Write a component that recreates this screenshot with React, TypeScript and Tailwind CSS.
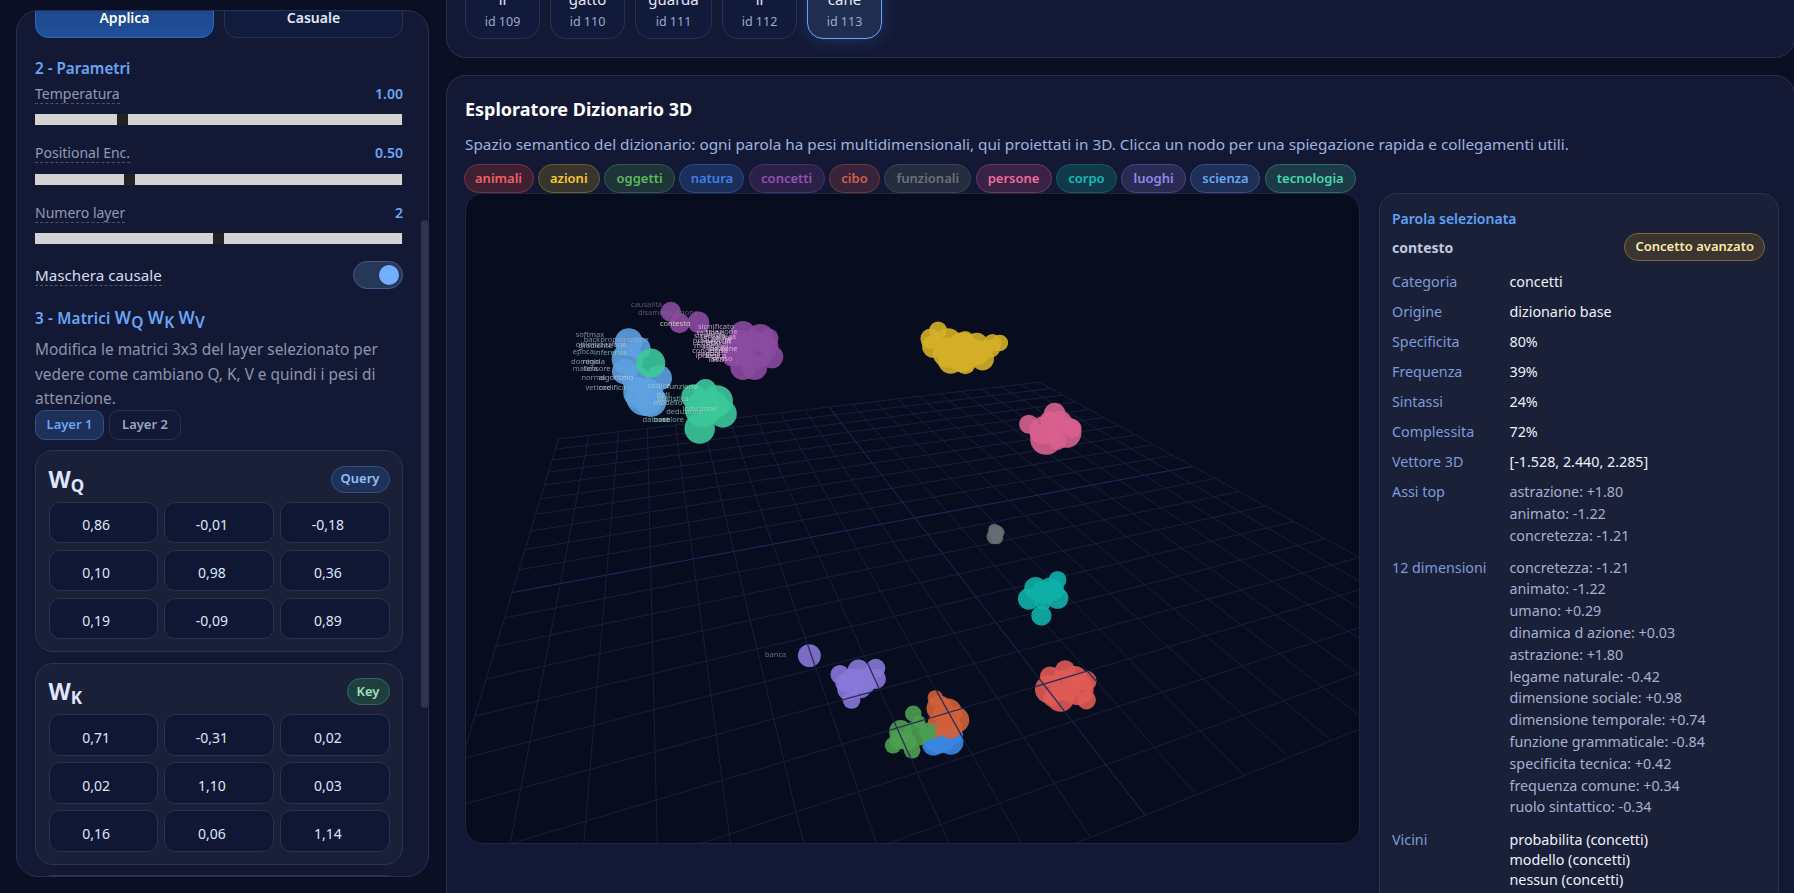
import React from "react";

const px = (z: number) => z / 1.7326 - 5.8;
const py = (z: number) => z / 2.376 - 3.4;
const pr = (z: number) => (z * 1.1) / 1.7326;

function fitHomography(pts: [number, number, number, number][]) {
  const n = 8;
  const M: number[][] = Array.from({ length: n }, () => new Array(n + 1).fill(0));
  const add = (r: number[], b: number) => {
    for (let i = 0; i < n; i++) {
      for (let j = 0; j < n; j++) M[i][j] += r[i] * r[j];
      M[i][n] += r[i] * b;
    }
  };
  for (const [s, v, X, Y] of pts) {
    add([s, v, 1, 0, 0, 0, -s * X, -v * X], X);
    add([0, 0, 0, s, v, 1, -s * Y, -v * Y], Y);
  }
  for (let i = 0; i < n; i++) {
    let p = i;
    for (let k = i + 1; k < n; k++) if (Math.abs(M[k][i]) > Math.abs(M[p][i])) p = k;
    [M[i], M[p]] = [M[p], M[i]];
    for (let k = 0; k < n; k++) {
      if (k === i) continue;
      const f = M[k][i] / M[i][i];
      for (let j = i; j <= n; j++) M[k][j] -= f * M[i][j];
    }
  }
  return M.map((r, i) => r[n] / r[i]);
}

const corner: [number, number, number, number] = [0, 0, 170, 590];
const leftMid: [number, number, number, number] = [1, 0, 90, 955];
const hm = fitHomography([
  corner, corner, corner, corner, corner, corner,
  leftMid, leftMid, leftMid,
  [0, 1, 1003, 455],
  [0, 1, 1003, 455],
  [1, 1, 1270, 655],
  [0, 0.5, 640, 515],
  [1, 0.5, 787, 778],
]);

const H = (s: number, v: number): [number, number] => {
  const d = hm[6] * s + hm[7] * v + 1;
  return [px((hm[0] * s + hm[1] * v + hm[2]) / d), py((hm[3] * s + hm[4] * v + hm[5]) / d)];
};

type C = [number, number, number];

const clusters: { color: string; pts: C[] }[] = [
  { color: "#d5af28", pts: [[828,332,14],[815,352,16],[845,360,22],[870,370,22],[820,370,18],[845,385,24],[870,395,24],[895,385,20],[905,400,18],[875,412,16],[850,405,20],[920,375,14],[935,362,13],[922,362,14],[895,365,18],[885,380,20],[875,355,14]] },
  { color: "#d8618e", pts: [[985,555,15],[1030,530,17],[1010,570,22],[1040,550,18],[1015,590,25],[1050,575,24],[1035,595,14],[1020,545,14],[1060,565,15]] },
  { color: "#666d70", pts: [[925,805,9],[932,812,10],[925,822,12],[930,825,10],[928,812,12]] },
  { color: "#0fb0a9", pts: [[1035,925,14],[997,945,18],[1022,945,17],[1010,955,18],[985,970,17],[1035,968,17],[1010,975,14],[1007,1010,16],[1030,950,15]] },
  { color: "#de5a55", pts: [[1048,1140,16],[1022,1155,16],[1085,1165,16],[1050,1175,25],[1020,1185,22],[1070,1185,25],[1040,1205,22],[1085,1210,15],[1025,1205,14],[1065,1160,20]] },
  { color: "#8878d8", pts: [[605,1105,18],[658,1150,15],[720,1135,15],[690,1140,17],[680,1165,20],[700,1165,20],[720,1160,16],[672,1185,17],[678,1210,14],[695,1185,14],[665,1170,14]] },
  { color: "#3a86e2", pts: [[830,1300,25],[850,1310,20],[820,1315,18],[845,1285,15],[855,1295,15]] },
  { color: "#d0603a", pts: [[823,1205,12],[830,1230,20],[845,1240,22],[860,1258,20],[830,1265,18],[850,1275,18],[825,1285,10]] },
  { color: "#4da050", pts: [[785,1243,13],[795,1262,10],[763,1285,18],[790,1290,20],[810,1285,14],[760,1305,15],[750,1318,13],[783,1330,13],[775,1310,14]] },
  { color: "#8a4aa0", pts: [[365,288,16],[380,315,16],[413,313,17],[490,340,20],[520,350,22],[535,350,15],[480,380,25],[510,380,30],[540,395,18],[490,420,20],[510,420,20],[470,395,15],[535,370,15],[490,365,22]] },
  { color: "#5ea0e0", pts: [[292,360,22],[310,375,18],[290,400,25],[285,430,20],[305,450,22],[320,490,30],[345,445,20],[330,500,25],[310,480,25]] },
  { color: "#3cc89a", pts: [[405,490,20],[425,475,18],[445,500,25],[420,520,28],[455,530,22],[415,565,24],[440,510,22],[330,410,23]] },
];

const lowerIdx = [4, 5, 6, 7, 8];

const labels: [string, number, number, string][] = [
  ["softmax",200,347,"#9fb4c4"],["backpropagazione",214,359,"#9fb4c4"],["ottimizzazione",200,372,"#b5c6d2"],["gradiente",205,375,"#b5c6d2"],
  ["epoca",195,388,"#9fb4c4"],["inferenza",232,391,"#8fd8b0"],["dominio",192,411,"#9fb4c4"],["regola",212,411,"#b5c6d2"],["malizia",195,429,"#9fb4c4"],
  ["tensore",214,429,"#b5c6d2"],["norma",210,451,"#9fb4c4"],["algoritmo",240,451,"#c5d6e2"],["vettore",217,474,"#9fb4c4"],["codifica",240,474,"#b5c6d2"],
  ["codice",325,470,"#9fd0d0"],["funzione",358,472,"#a8d8c8"],["dati",340,490,"#a8d8c8"],["statistica",342,500,"#a8d8c8"],["modello",335,510,"#a8d8c8"],
  ["deduzione",357,530,"#8fc8b8"],["induzione",385,524,"#9fd8c0"],["dataset",316,549,"#8fc8b8"],["base",335,549,"#a8d8c8"],["valore",350,549,"#8fc8b8"],
  ["causalità",296,277,"#7d6a8a"],["disambiguazione",308,296,"#7d6a8a"],["contesto",346,321,"#f5f0c8"],
  ["significato",412,330,"#e8c0e8"],["relazione",425,340,"#e8c0e8"],["struttura",405,350,"#e8c0e8"],["semantica",415,352,"#f0c8f0"],["probabilità",403,362,"#e8c0e8"],["nessun",425,364,"#f0c8f0"],
  ["modello",405,374,"#f0d0f0"],["sintassi",420,376,"#e8c0e8"],["concetto",402,386,"#e8c0e8"],["teoria",428,386,"#f0d0f0"],["ipotesi",408,398,"#f0c8f0"],["logica",425,398,"#e8c0e8"],["idea",430,408,"#e8c0e8"],
  ["ragione",410,344,"#f0c8f0"],["causa",436,356,"#f0d0f0"],["effetto",410,368,"#f0c8f0"],["nozione",432,380,"#f0d0f0"],["regola",412,392,"#f0c8f0"],["senso",436,404,"#f0c8f0"],
];

function Scene() {
  const lines: { a: [number, number]; b: [number, number]; c: boolean }[] = [];
  for (let i = 0; i <= 20; i++) lines.push({ a: H(i / 10, 0), b: H(i / 10, 1), c: i === 10 });
  for (let j = 0; j <= 20; j++) lines.push({ a: H(0, j / 20), b: H(2, j / 20), c: j === 10 });
  return (
    <svg viewBox="0 0 893 649" className="block h-full w-full blur-[0.7px]">
      <defs>
        <clipPath id="lower">
          {lowerIdx.flatMap((k) => clusters[k].pts).map((p, i) => (
            <circle key={i} cx={px(p[0])} cy={py(p[1])} r={pr(p[2])} />
          ))}
        </clipPath>
      </defs>
      {lines.map((l, i) => (
        <line key={i} x1={l.a[0]} y1={l.a[1]} x2={l.b[0]} y2={l.b[1]} stroke={l.c ? "#24285a" : "#1a1e3f"} strokeWidth={1} />
      ))}
      {clusters.map((c, i) => (
        <g key={i} fill={c.color} fillOpacity={0.9}>
          {c.pts.map((p, j) => (
            <circle key={j} cx={px(p[0])} cy={py(p[1])} r={pr(p[2])} />
          ))}
        </g>
      ))}
      <g clipPath="url(#lower)">
        {lines.map((l, i) => (
          <line key={i} x1={l.a[0]} y1={l.a[1]} x2={l.b[0]} y2={l.b[1]} stroke="#2a2c55" strokeWidth={1.3} />
        ))}
      </g>
      <g fontSize={7.5} fontFamily="'Noto Sans', sans-serif">
        {labels.map(([t, x, y, c], i) => (
          <text key={i} x={px(x)} y={py(y)} fill={c} fillOpacity={0.75}>{t}</text>
        ))}
        <text x={px(528)} y={py(1107)} fill="#6a6f88">banca</text>
      </g>
    </svg>
  );
}

function Param({ label, value, mt, smt, left }: { label: string; value: string; mt: string; smt: string; left: number }) {
  return (
    <div className={mt}>
      <div className="flex items-start justify-between">
        <span className="border-b border-dashed border-[#4a5270] text-[14px] leading-[18px] text-[#8f9ab8]">{label}</span>
        <span className="text-[14px] font-semibold leading-[18px] text-[#6aa5f5]">{value}</span>
      </div>
      <div className={`${smt} flex h-[11px] w-[368px] border-r border-[#222] bg-[#d3d3d3]`}>
        <div style={{ width: left }} />
        <div className="h-full w-[11px] bg-[#222]" />
      </div>
    </div>
  );
}

function Matrix({ sub, badge, badgeCls, values, className }: { sub: string; badge: string; badgeCls: string; values: string[]; className: string }) {
  return (
    <div className={`${className} rounded-[18px] border border-[#2d3350] bg-[#1a2038] px-[12.5px] pb-[12px] pt-[14.5px]`}>
      <div className="flex h-[27px] items-center justify-between">
        <div className="text-[23px] font-bold leading-[27px] text-[#dfe6ff]">
          W<sub className="text-[17px]">{sub}</sub>
        </div>
        <span className={`flex h-[27px] items-center rounded-full border px-[9px] text-[13px] font-semibold ${badgeCls}`}>{badge}</span>
      </div>
      <div className="mt-[9px] grid grid-cols-3 gap-x-[6.5px] gap-y-[6.5px]">
        {values.map((v, i) => (
          <div key={i} className="flex h-[41.5px] items-center justify-center rounded-[11px] border border-[#2a3050] bg-[#101735] pr-[14px] pt-[5px] text-[14px] text-[#dfe6f8]">
            {v}
          </div>
        ))}
      </div>
    </div>
  );
}

const chips = [
  { t: "animali", c: "bg-[#3f2033] border-[#70354a] text-[#f06060] w-[70px]" },
  { t: "azioni", c: "bg-[#38342e] border-[#6e5f2c] text-[#f5cc30] w-[62px]" },
  { t: "oggetti", c: "bg-[#1f3438] border-[#30594a] text-[#5cb860] w-[71px]" },
  { t: "natura", c: "bg-[#1c2f5a] border-[#2b4a8a] text-[#4080e8] w-[65px]" },
  { t: "concetti", c: "bg-[#2b2148] border-[#4a2f6a] text-[#9350b0] w-[76px]" },
  { t: "cibo", c: "bg-[#38233a] border-[#6a3a3a] text-[#d06048] w-[51px]" },
  { t: "funzionali", c: "bg-[#262c40] border-[#3a4258] text-[#6a7078] w-[87px]" },
  { t: "persone", c: "bg-[#3a2245] border-[#70386a] text-[#f06ca0] w-[76px]" },
  { t: "corpo", c: "bg-[#103a4a] border-[#165a60] text-[#10bfb8] w-[61px]" },
  { t: "luoghi", c: "bg-[#2a2a52] border-[#474480] text-[#9088e8] w-[65px]" },
  { t: "scienza", c: "bg-[#1e2f58] border-[#3a5080] text-[#68a8f0] w-[70px]" },
  { t: "tecnologia", c: "bg-[#1c3a48] border-[#2e6a60] text-[#45d8a8] w-[91px]" },
];

const info: [string, string][] = [
  ["Categoria", "concetti"], ["Origine", "dizionario base"], ["Specificita", "80%"], ["Frequenza", "39%"],
  ["Sintassi", "24%"], ["Complessita", "72%"], ["Vettore 3D", "[-1.528, 2.440, 2.285]"],
];
const dims = ["concretezza: -1.21","animato: -1.22","umano: +0.29","dinamica d azione: +0.03","astrazione: +1.80","legame naturale: -0.42","dimensione sociale: +0.98","dimensione temporale: +0.74","funzione grammaticale: -0.84","specificita tecnica: +0.42","frequenza comune: +0.34","ruolo sintattico: -0.34"];

const tokens = [
  { w: "il", id: "id 109", c: "w-[75px]" },
  { w: "gatto", id: "id 110", c: "w-[75px]" },
  { w: "guarda", id: "id 111", c: "w-[77px]" },
  { w: "il", id: "id 112", c: "w-[75px]" },
];

export default function App() {
  return (
    <div className="flex h-screen overflow-hidden bg-[#0a0f24] font-['Noto_Sans','Open_Sans',sans-serif]">
      <aside className="relative ml-4 mt-[10px] h-[867px] w-[413px] shrink-0 overflow-hidden rounded-[22px] border border-[#2a3050] bg-[#131935]">
        <div className="-mt-[13px] ml-[18px] w-[368px]">
          <div className="flex gap-[10px]">
            <button className="h-[40px] flex-1 rounded-[13px] border border-[#2f6ac0] bg-gradient-to-b from-[#1c4589] to-[#1f5099] pb-[2px] text-[14px] font-semibold text-white">Applica</button>
            <button className="h-[40px] flex-1 rounded-[13px] border border-[#2a3050] bg-[#111b3d] pb-[2px] text-[14px] font-semibold text-[#e3e8f8]">Casuale</button>
          </div>
          <div className="mt-[20px] text-[15.2px] font-semibold leading-[20px] text-[#6aa5f5]">2 - Parametri</div>
          <Param label="Temperatura" value="1.00" mt="mt-[7px]" smt="mt-[10px]" left={82} />
          <Param label="Positional Enc." value="0.50" mt="mt-[19px]" smt="mt-[11px]" left={89} />
          <Param label="Numero layer" value="2" mt="mt-[19px]" smt="mt-[10px]" left={178} />
          <div className="mt-[17px] flex h-[28px] items-center justify-between">
            <span className="mt-[2px] border-b border-dashed border-[#4a5270] text-[15.2px] leading-[19px] text-[#d6dcf0]">Maschera causale</span>
            <span className="flex h-[28px] w-[50px] items-center justify-end rounded-full border border-[#3f5a8a] bg-[#263757] pr-[3px]">
              <span className="h-[20px] w-[20px] rounded-full bg-[#74aeff]" />
            </span>
          </div>
          <div className="mt-[18px] text-[15.2px] font-semibold leading-[22px] tracking-[0.2px] text-[#6aa5f5]">
            3 - Matrici <span className="text-[17px]">W</span><sub className="text-[15.5px]">Q</sub> <span className="text-[17px]">W</span><sub className="text-[15.5px]">K</sub> <span className="text-[17px]">W</span><sub className="text-[15.5px]">V</sub>
          </div>
          <p className="mt-[9px] text-[15.4px] leading-[24.5px] text-[#8c95ae]">Modifica le matrici 3x3 del layer selezionato per vedere come cambiano Q, K, V e quindi i pesi di attenzione.</p>
          <div className="-mt-[2px] flex gap-[5px]">
            <button className="h-[30px] w-[69px] rounded-[10px] border border-[#36507f] bg-[#1e3158] text-[13px] font-semibold text-[#6aa5f5]">Layer 1</button>
            <button className="h-[30px] w-[72px] rounded-[10px] border border-[#2a3050] text-[13px] font-semibold text-[#9aa5c0]">Layer 2</button>
          </div>
          <Matrix className="mt-[10.5px]" sub="Q" badge="Query" badgeCls="border-[#34507f] bg-[#1e3158] text-[#90c0f8]" values={["0,86","-0,01","-0,18","0,10","0,98","0,36","0,19","-0,09","0,89"]} />
          <Matrix className="mt-[10.5px]" sub="K" badge="Key" badgeCls="border-[#2f6a5a] bg-[#1f3f3f] text-[#9fe0b8]" values={["0,71","-0,31","0,02","0,02","1,10","0,03","0,16","0,06","1,14"]} />
          <div className="mt-[10px] h-[40px] rounded-[18px] border border-[#2d3350] bg-[#1a2038]" />
        </div>
        <div className="absolute right-0 top-[209px] h-[488px] w-[7px] rounded-full bg-[#2f3550]" />
      </aside>

      <main className="ml-[17px] w-[1349px] shrink-0">
        <section className="-mt-[38px] rounded-[20px] border border-[#2a3050] bg-[#131935] px-[18px] pb-[18px] pt-[18px]">
          <div className="flex gap-[10px]">
            {tokens.map((t, i) => (
              <div key={i} className={`flex h-[57.5px] flex-col items-center rounded-[16px] border border-[#2a3050] bg-[#111a3a] pt-[5.5px] ${t.c}`}>
                <span className="text-[15px] leading-[22px] text-[#e3e8f8]">{t.w}</span>
                <span className="mt-[3px] text-[12.5px] leading-[18px] text-[#9aa8d0]">{t.id}</span>
              </div>
            ))}
            <div className="flex h-[57.5px] w-[75px] flex-col items-center rounded-[16px] border border-[#6aa5f5] bg-[#1f2d50] pt-[5.5px] shadow-[0_0_18px_rgba(80,140,240,0.25)]">
              <span className="text-[15px] leading-[22px] text-[#e3e8f8]">cane</span>
              <span className="mt-[3px] text-[12.5px] leading-[18px] text-[#9aa8d0]">id 113</span>
            </div>
          </div>
        </section>

        <section className="mt-[17.5px] rounded-[20px] border border-[#2a3050] bg-[#131935] pl-[18px] pr-[15px] pt-[21px]">
          <h2 className="text-[18px] font-bold leading-[24px] text-white">Esploratore Dizionario 3D</h2>
          <p className="mt-[11.5px] text-[15.3px] leading-[22px] text-[#9fb2de]">Spazio semantico del dizionario: ogni parola ha pesi multidimensionali, qui proiettati in 3D. Clicca un nodo per una spiegazione rapida e collegamenti utili.</p>
          <div className="-ml-[1.5px] mt-[9.5px] flex gap-[4.3px]">
            {chips.map((c) => (
              <span key={c.t} className={`flex h-[29px] shrink-0 items-center justify-center rounded-full border text-[13px] font-semibold ${c.c}`}>{c.t}</span>
            ))}
          </div>
          <div className="flex items-start gap-[19px]">
            <div className="h-[651px] w-[895px] shrink-0 overflow-hidden rounded-[18px] border border-[#20263f] bg-[#070c1e]">
              <Scene />
            </div>
            <div className="w-[400px] shrink-0 rounded-[18px] border border-[#2d3350] bg-[#1a2038] px-[12px] pb-[40px] pt-[15px]">
              <div className="text-[14px] font-semibold leading-[20px] text-[#5ea0f5]">Parola selezionata</div>
              <div className="mt-[4px] flex h-[28px] items-center justify-between pr-[1px]">
                <span className="text-[14px] font-bold text-[#c0c8e0]">contesto</span>
                <span className="flex h-[28px] items-center rounded-full border border-[#7a6a30] bg-[#3a3530] px-[10px] text-[13px] font-semibold text-[#ffe9a8]">Concetto avanzato</span>
              </div>
              <div className="mt-[10px] flex flex-col gap-[8px]">
                {info.map(([k, v]) => (
                  <div key={k} className="flex text-[14.3px] leading-[22px]">
                    <span className="w-[117.5px] shrink-0 text-[#7f9ad8]">{k}</span>
                    <span className="text-[#eef1fa]">{v}</span>
                  </div>
                ))}
                <div className="flex text-[14.3px] leading-[21.8px]">
                  <span className="w-[117.5px] shrink-0 text-[#7f9ad8]">Assi top</span>
                  <div className="text-[#a5b0d0]">
                    <div>astrazione: +1.80</div>
                    <div>animato: -1.22</div>
                    <div>concretezza: -1.21</div>
                  </div>
                </div>
                <div className="mt-[2.3px] flex text-[14.3px] leading-[21.8px]">
                  <span className="w-[117.5px] shrink-0 text-[#7f9ad8]">12 dimensioni</span>
                  <div className="text-[#a5b0d0]">
                    {dims.map((d) => (<div key={d}>{d}</div>))}
                  </div>
                </div>
                <div className="mt-[4px] flex text-[14.3px] leading-[20px]">
                  <span className="w-[117.5px] shrink-0 text-[#7f9ad8]">Vicini</span>
                  <div className="text-[#eef1fa]">
                    <div>probabilita (concetti)</div>
                    <div>modello (concetti)</div>
                    <div>nessun (concetti)</div>
                  </div>
                </div>
              </div>
            </div>
          </div>
        </section>
      </main>
    </div>
  );
}
